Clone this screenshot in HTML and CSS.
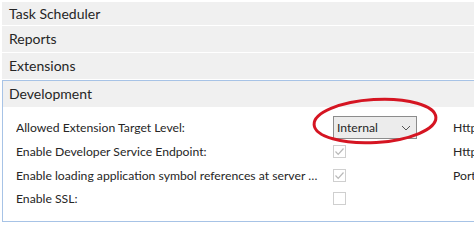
FILE: index.html
```html
<!DOCTYPE html>
<html>
<head>
<meta charset="utf-8">
<link rel="stylesheet" href="styles.css">
</head>
<body>
<div class="page">
  <div class="section collapsed first">Task Scheduler</div>
  <div class="section collapsed">Reports</div>
  <div class="section collapsed">Extensions</div>
  <div class="section open">
    <div class="head">Development</div>
    <div class="body">
      <div class="label">Allowed Extension Target Level:</div>
      <div class="ctl">
        <div class="select"><span>Internal</span>
          <svg class="chev" width="10" height="6" viewBox="0 0 10 6"><path d="M1 1 L5 5 L9 1" fill="none" stroke="#555" stroke-width="1"/></svg>
        </div>
      </div>
      <div class="side">Https</div>

      <div class="label">Enable Developer Service Endpoint:</div>
      <div class="ctl"><span class="cb"><svg width="11" height="11" viewBox="0 0 11 11"><path d="M1.5 5.5 L4.2 8.3 L9.5 2.5" fill="none" stroke="#b9b9b9" stroke-width="1.2"/></svg></span></div>
      <div class="side">Https</div>

      <div class="label">Enable loading application symbol references at server startup</div>
      <div class="ctl"><span class="cb"><svg width="11" height="11" viewBox="0 0 11 11"><path d="M1.5 5.5 L4.2 8.3 L9.5 2.5" fill="none" stroke="#b9b9b9" stroke-width="1.2"/></svg></span></div>
      <div class="side">Port</div>

      <div class="label">Enable SSL:</div>
      <div class="ctl"><span class="cb"></span></div>
      <div class="side"></div>
    </div>
    <svg class="ring" width="130" height="52" viewBox="0 0 130 52"><ellipse cx="65" cy="26" rx="61" ry="21.5" transform="rotate(-3.5 65 26)" fill="none" stroke="#d51522" stroke-width="3"/></svg>
  </div>
</div>
</body>
</html>
```
FILE: styles.css
```css
html, body {
  margin: 0;
  padding: 0;
  background: #ffffff;
  overflow: hidden;
}
body {
  width: 474px;
  height: 244px;
  font-family: Lato, "Open Sans", sans-serif;
  font-size: 12.2px;
  color: #262626;
}
.page {
  padding: 2px 0 0 2px;
  display: flex;
  flex-direction: column;
  gap: 1px;
  width: 620px;
}
.section.collapsed {
  background: #f0f0f0;
  height: 26px;
  line-height: 26px;
  padding-left: 7px;
  font-size: 14px;
}
.section.collapsed.first {
  height: 23px;
  line-height: 24px;
}
.section.open {
  position: relative;
  border: 1px solid #a7c3e6;
  border-width: 1px 0 1px 1px;
}
.head {
  background: #f0f0f0;
  height: 26px;
  line-height: 26px;
  padding-left: 6px;
  font-size: 14px;
}
.body {
  display: grid;
  grid-template-columns: 317px 84px 1fr;
  grid-template-rows: 23px 23px 22px 22px;
  row-gap: 1px;
  column-gap: 0;
  padding: 9px 0 12px 13px;
  align-items: center;
}
.label {
  white-space: nowrap;
  overflow: hidden;
  text-overflow: ellipsis;
  padding-right: 12px;
}
.ctl {
  display: flex;
  align-items: center;
  height: 100%;
}
.side {
  padding-left: 36px;
}
.select {
  box-sizing: border-box;
  width: 84px;
  height: 23px;
  border: 1px solid #8c8c8c;
  background: #ececec;
  display: flex;
  align-items: center;
  justify-content: space-between;
  padding: 0 5px 0 3px;
}
.cb {
  box-sizing: border-box;
  width: 13px;
  height: 13px;
  border: 1px solid #cfcfcf;
  background: #fff;
  display: flex;
  align-items: center;
  justify-content: center;
}
.ring {
  position: absolute;
  left: 307px;
  top: 14px;
}
```
